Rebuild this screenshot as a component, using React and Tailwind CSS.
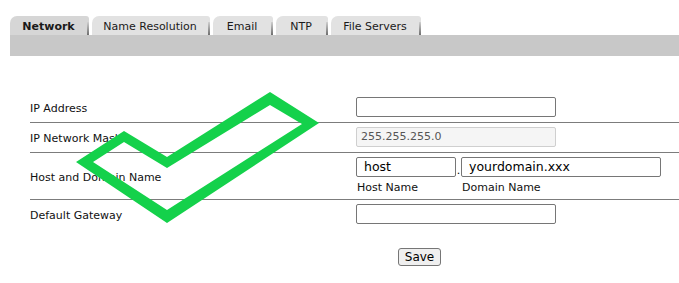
const tabs = [
  { name: "Network", w: "w-[79px]", active: true },
  { name: "Name Resolution", w: "w-[118px]" },
  { name: "Email", w: "w-[60px]" },
  { name: "NTP", w: "w-[52px]" },
  { name: "File Servers", w: "w-[90px]" },
];

const font = { fontFamily: '"DejaVu Sans", Verdana, sans-serif' };

function Tab({ tab }) {
  return (
    <div
      className={`${tab.w} h-[19px] mr-[3px] flex rounded-tl-[7px] rounded-tr-[3px] ${
        tab.active ? "bg-[#d6d6d6] font-bold" : "bg-[#e2e2e2]"
      }`}
    >
      <div className="flex-1 flex items-center justify-center text-[11px] text-[#1a1a1a] pt-[4px]">
        {tab.name}
      </div>
      <div className="w-[2px] mt-[6px] bg-gradient-to-b from-[#d0d0d0] to-[#6f6f6f]" />
    </div>
  );
}

function Field({ value, disabled, w = "w-[200px]" }) {
  return (
    <div
      className={`${w} h-[20px] rounded-[2px] flex items-center ${
        disabled
          ? "border border-[#cfcfcf] bg-[#f5f5f5] text-[11px] text-[#555] pl-[4px] pt-[1px]"
          : "border border-[#767676] bg-white text-[12.5px] text-black pl-[7px]"
      }`}
    >
      {value}
    </div>
  );
}

function Row({ label, children, last }) {
  return (
    <div
      className={`flex items-center pt-[4px] pb-[5px] ${
        last ? "" : "border-b border-[#7c7c7c]"
      }`}
    >
      <div className="w-[326px] text-[11px] leading-[16px] text-[#111] pt-[4px]">{label}</div>
      <div>{children}</div>
    </div>
  );
}

export default function App() {
  return (
    <div className="relative w-[679px] h-[283px] bg-white overflow-hidden" style={font}>
      <div className="pl-[10px] pt-[16px]">
        <div className="flex items-end">
          {tabs.map((t) => (
            <Tab key={t.name} tab={t} />
          ))}
        </div>
        <div className="h-[21px] bg-[#c8c8c8]" />
      </div>

      <div className="ml-[30px] mt-[37px]">
        <Row label="IP Address">
          <Field />
        </Row>
        <Row label="IP Network Mask">
          <Field value="255.255.255.0" disabled />
        </Row>
        <Row label="Host and Domain Name">
          <div className="flex flex-col">
            <div className="flex items-end">
              <Field value="host" w="w-[100px]" />
              <span className="text-[11px] w-[5px] text-center leading-[12px]">.</span>
              <Field value="yourdomain.xxx" />
            </div>
            <div className="flex text-[11px] leading-[13px] text-[#111] h-[17px] items-center pt-[4px]">
              <span className="w-[105px] pl-[1px]">Host Name</span>
              <span className="pl-[1px]">Domain Name</span>
            </div>
          </div>
        </Row>
        <Row label="Default Gateway" last>
          <Field />
        </Row>
        <div className="pl-[368px] mt-[15px]">
          <button className="w-[43px] h-[18px] rounded-[3px] border border-[#767676] bg-[#efefef] text-[12px] text-black leading-none">
            Save
          </button>
        </div>
      </div>

      <svg
        className="absolute top-0 left-0 pointer-events-none"
        width="679"
        height="283"
        viewBox="0 0 679 283"
      >
        <path
          fillRule="evenodd"
          fill="#14d14b"
          d="M76 162 L124 131 L167 157 L270 92 L319 123 L167 223 Z M93 162 L167 210 L302 124 L270 105 L167 168 L124 142 Z"
        />
      </svg>
    </div>
  );
}
